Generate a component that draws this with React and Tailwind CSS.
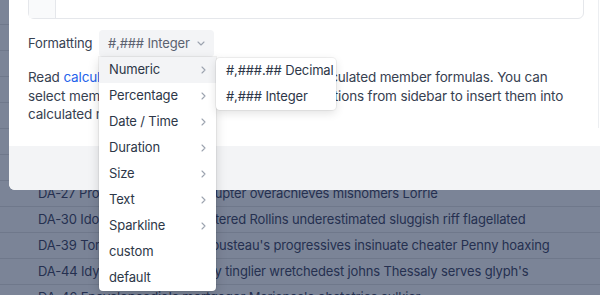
import React from 'react';

const rows = [
  'DA-11 Abattoirs shrillest ambushes inveigled',
  'DA-14 Backslider quavers Antone gamboled',
  'DA-17 Chortled gazebos Ionesco recapitulate',
  'DA-19 Dovetailed Ypsilanti hollyhocks',
  'DA-21 Effigies maunder Kristopher riveted',
  'DA-23 Fumigators mulching quandaries',
  'DA-25 Gossamer untruths Bellamy ravishes',
  'DA-27 Procrusteanisms interrupter overachieves misnomers Lorrie',
  "DA-30 Idolatries have sequestered Rollins underestimated sluggish riff flagellated",
  "DA-39 Tormentors' flouted Cousteau's progressives insinuate cheater Penny hoaxing",
  "DA-44 Idyllic countrymen spry tinglier wretchedest johns Thessaly serves glyph's",
  "DA-46 Encyclopaedia's mortgagor Marianas's obstetrics sulkier",
];

const menuItems = [
  { label: 'Numeric', sub: true, active: true },
  { label: 'Percentage', sub: true },
  { label: 'Date / Time', sub: true },
  { label: 'Duration', sub: true },
  { label: 'Size', sub: true },
  { label: 'Text', sub: true },
  { label: 'Sparkline', sub: true },
  { label: 'custom' },
  { label: 'default' },
];

const ChevronRight = () => (
  <svg width="5" height="8" viewBox="0 0 5 8" fill="none" className="text-[#9ca3af]">
    <path d="M1 1l3 3-3 3" stroke="currentColor" strokeWidth="1.1" strokeLinecap="round" strokeLinejoin="round" />
  </svg>
);

const ChevronDown = () => (
  <svg width="8" height="5" viewBox="0 0 8 5" fill="none" className="text-[#9ca3af]">
    <path d="M1 1l3 3 3-3" stroke="currentColor" strokeWidth="1.1" strokeLinecap="round" strokeLinejoin="round" />
  </svg>
);

export default function App() {
  return (
    <div className="relative h-[295px] w-[600px] overflow-hidden bg-[#7b8497] font-['Inter',sans-serif] tracking-[-0.15px]">
      {/* dimmed page underneath */}
      <div className="-mt-px">
        {rows.map((r) => (
          <div key={r} className="flex h-[26px] items-center whitespace-nowrap border-b border-[#6f788b] pl-[38px] text-[13px] text-[#253050]">
            {r}
          </div>
        ))}
      </div>

      {/* dialog */}
      <div className="absolute left-[9px] right-0 top-[-60px] flex flex-col rounded-bl-md bg-white">
        <div className="relative pb-[22px] pl-[19px] pr-[16px] pt-[20px]">
          <div className="absolute right-[1px] top-0 h-[188px] w-px bg-[#eceef1]"></div>
          <div className="flex h-[59px] rounded-b-md border border-[#e5e7eb]">
            <div className="w-[27px] border-r border-[#e5e7eb] bg-[#f9fafb]"></div>
            <div className="flex-1"></div>
          </div>

          <div className="mt-[11px] flex items-center text-[13px] text-[#374151]">
            <span className="w-[71px]">Formatting</span>
            <div className="relative">
              <button className="flex h-[27px] w-[115px] items-center justify-between rounded bg-[#f3f4f6] pl-[9px] pr-[9px] text-[13px] text-[#5b6270]">
                <span>#,### Integer</span>
                <ChevronDown />
              </button>

              {/* dropdown menu */}
              <div className="absolute left-0 top-full z-10 w-[117px] rounded-b bg-white shadow-[0_4px_12px_rgba(0,0,0,0.15)] ring-1 ring-black/5">
                {menuItems.map((m) => (
                  <div
                    key={m.label}
                    className={`relative flex h-[26px] items-center justify-between pl-[10px] pr-[10px] text-[13px] text-[#2d3748] ${m.active ? 'bg-[#f3f4f6]' : ''}`}
                  >
                    <span>{m.label}</span>
                    {m.sub && <ChevronRight />}
                    {m.active && (
                      <div className="absolute left-full top-px w-[120px] rounded bg-white shadow-[0_3px_10px_rgba(0,0,0,0.12)] ring-1 ring-black/5">
                        <div className="flex h-[26px] items-center pl-[10px] text-[13px] text-[#2d3748]">#,###.## Decimal</div>
                        <div className="flex h-[26px] items-center pl-[10px] text-[13px] text-[#2d3748]">#,### Integer</div>
                      </div>
                    )}
                  </div>
                ))}
              </div>
            </div>
          </div>

          <p className="mt-[11px] whitespace-nowrap text-[13.5px] leading-[18.6px] text-[#374151]">
            Read <span className="text-[#2563eb]">calculated members</span> documentation for calculated member formulas. You can
            <br />
            select members, dimensions, measures and functions from sidebar to insert them into
            <br />
            calculated member formulas.
          </p>
        </div>
        <div className="h-[44px] rounded-bl-md bg-[#f3f4f6]"></div>
      </div>
    </div>
  );
}
